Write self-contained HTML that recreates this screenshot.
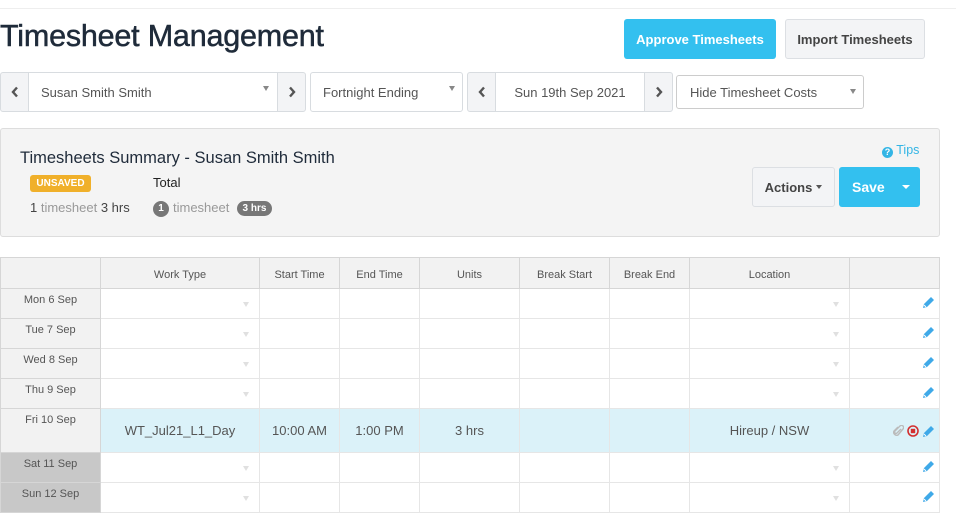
<!DOCTYPE html>
<html><head><meta charset="utf-8"><style>
*{box-sizing:border-box;margin:0;padding:0}
body{width:956px;height:499px;overflow:hidden;background:#fff;font-family:"Liberation Sans",sans-serif;color:#333;position:relative}
.a{position:absolute}
.topline{left:0;top:8px;width:956px;height:1px;background:#eee}
h1{position:absolute;left:0;top:19px;font-size:30.5px;font-weight:normal;color:#1f2b3a;letter-spacing:-0.2px;-webkit-text-stroke:0.5px #1f2b3a;white-space:nowrap}
.btn{position:absolute;display:flex;align-items:center;justify-content:center;font-size:13px;border-radius:3px}
.blue{background:#33c0ef;color:#fff;font-weight:bold}
.grey{background:#f3f4f6;border:1px solid #dcdfe3;color:#444;font-weight:bold}
.box{position:absolute;border:1px solid #d8dce0;background:#fff;font-size:13px;color:#555;display:flex;align-items:center}
.nav{position:absolute;background:#f3f4f6;border:1px solid #d8dce0;display:flex;align-items:center;justify-content:center}
.caret{position:absolute;width:0;height:0;border-left:3.5px solid transparent;border-right:3.5px solid transparent;border-top:5px solid #888}
.panel{left:0;top:128px;width:940px;height:109px;background:#f4f4f4;border:1px solid #ddd;border-radius:3px}
table{position:absolute;left:0;top:257px;border-collapse:collapse;font-size:11px;color:#555}
td,th{border:1px solid #e6e6e6;padding:0;position:relative}
th{background:#f2f2f2;font-weight:normal;height:31px;border-color:#d6d6d6;color:#555;padding-top:3px}
td.d{background:#f2f2f2;text-align:center;vertical-align:top;padding-top:5px;border-color:#d6d6d6}
td.w{background:#c8c8c8}
tr.r td{height:30px}
tr.hl td:not(.d){background:#dbf2f9;font-size:13px;text-align:center;color:#555}
.dd{position:absolute;right:10px;top:13px;border-left:3.5px solid transparent;border-right:3.5px solid transparent;border-top:5px solid #e0e0e0;width:0;height:0}
.pen{position:absolute;right:4px;top:7px}
</style></head><body>
<div class="a topline"></div>
<h1>Timesheet Management</h1>
<div class="btn blue" style="left:624px;top:19px;width:152px;height:40px">Approve Timesheets</div>
<div class="btn grey" style="left:785px;top:19px;width:140px;height:40px">Import Timesheets</div>

<div class="nav" style="left:0;top:72px;width:29px;height:40px;border-radius:3px 0 0 3px"><svg width="8" height="12" viewBox="0 0 8 12"><path d="M6 1.5L2 6l4 4.5" fill="none" stroke="#555" stroke-width="2.4"/></svg></div>
<div class="box" style="left:28px;top:72px;width:250px;height:40px;padding-left:12px">Susan Smith Smith</div>
<div class="caret" style="left:263px;top:86px"></div>
<div class="nav" style="left:277px;top:72px;width:29px;height:40px;border-radius:0 3px 3px 0"><svg width="8" height="12" viewBox="0 0 8 12"><path d="M2 1.5L6 6l-4 4.5" fill="none" stroke="#555" stroke-width="2.4"/></svg></div>
<div class="box" style="left:310px;top:72px;width:153px;height:40px;padding-left:12px;border-radius:3px">Fortnight Ending</div>
<div class="caret" style="left:449px;top:86px"></div>
<div class="nav" style="left:467px;top:72px;width:29px;height:40px;border-radius:3px 0 0 3px"><svg width="8" height="12" viewBox="0 0 8 12"><path d="M6 1.5L2 6l4 4.5" fill="none" stroke="#555" stroke-width="2.4"/></svg></div>
<div class="box" style="left:495px;top:72px;width:150px;height:40px;justify-content:center">Sun 19th Sep 2021</div>
<div class="nav" style="left:644px;top:72px;width:29px;height:40px;border-radius:0 3px 3px 0"><svg width="8" height="12" viewBox="0 0 8 12"><path d="M2 1.5L6 6l-4 4.5" fill="none" stroke="#555" stroke-width="2.4"/></svg></div>
<div class="box" style="left:676px;top:75px;width:188px;height:34px;padding-left:13px;border-radius:3px;border-color:#ccc">Hide Timesheet Costs</div>
<div class="caret" style="left:850px;top:89px"></div>

<div class="a panel"></div>
<div class="a" style="left:20px;top:149px;font-size:16.5px;color:#1f2b3a">Timesheets Summary - Susan Smith Smith</div>
<div class="a" style="left:30px;top:175px;width:61px;height:17px;background:#f0b02a;color:#fff;font-size:10px;font-weight:bold;border-radius:3px;text-align:center;line-height:17px">UNSAVED</div>
<div class="a" style="left:153px;top:175px;font-size:13px;color:#222">Total</div>
<div class="a" style="left:30px;top:200px;font-size:13px;color:#444">1 <span style="color:#999">timesheet</span> 3 hrs</div>
<div class="a" style="left:153px;top:201px;width:16px;height:16px;border-radius:50%;background:#777;color:#fff;font-size:10px;font-weight:bold;text-align:center;line-height:16px">1</div>
<div class="a" style="left:173px;top:200px;font-size:13px;color:#999">timesheet</div>
<div class="a" style="left:237px;top:201px;width:35px;height:15px;border-radius:8px;background:#777;color:#fff;font-size:10px;font-weight:bold;text-align:center;line-height:15px">3 hrs</div>
<div class="a" style="left:882px;top:143px;font-size:12.5px;color:#33b5e5"><span style="display:inline-block;width:11px;height:11px;border-radius:50%;background:#33b5e5;color:#fff;font-size:9px;font-weight:bold;text-align:center;line-height:11px;vertical-align:-1px">?</span> Tips</div>
<div class="btn grey" style="left:752px;top:167px;width:83px;height:40px;background:#f3f4f6">Actions <span style="display:inline-block;margin-left:4px;border-left:3.5px solid transparent;border-right:3.5px solid transparent;border-top:4px solid #555"></span></div>
<div class="btn blue" style="left:839px;top:167px;width:81px;height:40px;justify-content:flex-start;padding-left:13px;font-size:14px">Save<span style="position:absolute;right:10px;top:18px;border-left:4px solid transparent;border-right:4px solid transparent;border-top:4px solid #fff"></span></div>

<table>
<colgroup><col style="width:100px"><col style="width:159px"><col style="width:80px"><col style="width:80px"><col style="width:100px"><col style="width:90px"><col style="width:80px"><col style="width:160px"><col style="width:90px"></colgroup>
<tr><th></th><th>Work Type</th><th>Start Time</th><th>End Time</th><th>Units</th><th>Break Start</th><th>Break End</th><th>Location</th><th></th></tr>
<tr class="r"><td class="d">Mon 6 Sep</td><td><i class="dd"></i></td><td></td><td></td><td></td><td></td><td></td><td><i class="dd"></i></td><td><svg class="pen" width="13" height="13" viewBox="0 0 13 13"><path d="M1 12l1-4 7-7 3 3-7 7z" fill="#3fa9e8"/><path d="M2 9l2 2" stroke="#fff" stroke-width="1"/></svg></td></tr>
<tr class="r"><td class="d">Tue 7 Sep</td><td><i class="dd"></i></td><td></td><td></td><td></td><td></td><td></td><td><i class="dd"></i></td><td><svg class="pen" width="13" height="13" viewBox="0 0 13 13"><path d="M1 12l1-4 7-7 3 3-7 7z" fill="#3fa9e8"/><path d="M2 9l2 2" stroke="#fff" stroke-width="1"/></svg></td></tr>
<tr class="r"><td class="d">Wed 8 Sep</td><td><i class="dd"></i></td><td></td><td></td><td></td><td></td><td></td><td><i class="dd"></i></td><td><svg class="pen" width="13" height="13" viewBox="0 0 13 13"><path d="M1 12l1-4 7-7 3 3-7 7z" fill="#3fa9e8"/><path d="M2 9l2 2" stroke="#fff" stroke-width="1"/></svg></td></tr>
<tr class="r"><td class="d">Thu 9 Sep</td><td><i class="dd"></i></td><td></td><td></td><td></td><td></td><td></td><td><i class="dd"></i></td><td><svg class="pen" width="13" height="13" viewBox="0 0 13 13"><path d="M1 12l1-4 7-7 3 3-7 7z" fill="#3fa9e8"/><path d="M2 9l2 2" stroke="#fff" stroke-width="1"/></svg></td></tr>
<tr class="hl"><td class="d" style="height:44px">Fri 10 Sep</td><td>WT_Jul21_L1_Day</td><td>10:00 AM</td><td>1:00 PM</td><td>3 hrs</td><td></td><td></td><td>Hireup / NSW</td><td>
<svg class="a" style="right:35px;top:16px" width="11" height="12" viewBox="0 0 11 12"><path d="M8 4L4 8a1.2 1.2 0 0 1-2-2l5-5a2 2 0 0 1 3 3L5 10a3 3 0 0 1-4-4l4-4" fill="none" stroke="#bbb" stroke-width="1.4"/></svg>
<svg class="a" style="right:20px;top:16px" width="12" height="12" viewBox="0 0 12 12"><circle cx="6" cy="6" r="5" fill="none" stroke="#d32f2f" stroke-width="1.6"/><rect x="3.8" y="3.8" width="4.4" height="4.4" fill="#d32f2f"/></svg>
<svg class="pen" style="top:16px" width="13" height="13" viewBox="0 0 13 13"><path d="M1 12l1-4 7-7 3 3-7 7z" fill="#3fa9e8"/><path d="M2 9l2 2" stroke="#fff" stroke-width="1"/></svg></td></tr>
<tr class="r"><td class="d w">Sat 11 Sep</td><td><i class="dd"></i></td><td></td><td></td><td></td><td></td><td></td><td><i class="dd"></i></td><td><svg class="pen" width="13" height="13" viewBox="0 0 13 13"><path d="M1 12l1-4 7-7 3 3-7 7z" fill="#3fa9e8"/><path d="M2 9l2 2" stroke="#fff" stroke-width="1"/></svg></td></tr>
<tr class="r"><td class="d w">Sun 12 Sep</td><td><i class="dd"></i></td><td></td><td></td><td></td><td></td><td></td><td><i class="dd"></i></td><td><svg class="pen" width="13" height="13" viewBox="0 0 13 13"><path d="M1 12l1-4 7-7 3 3-7 7z" fill="#3fa9e8"/><path d="M2 9l2 2" stroke="#fff" stroke-width="1"/></svg></td></tr>
</table>
</body></html>
